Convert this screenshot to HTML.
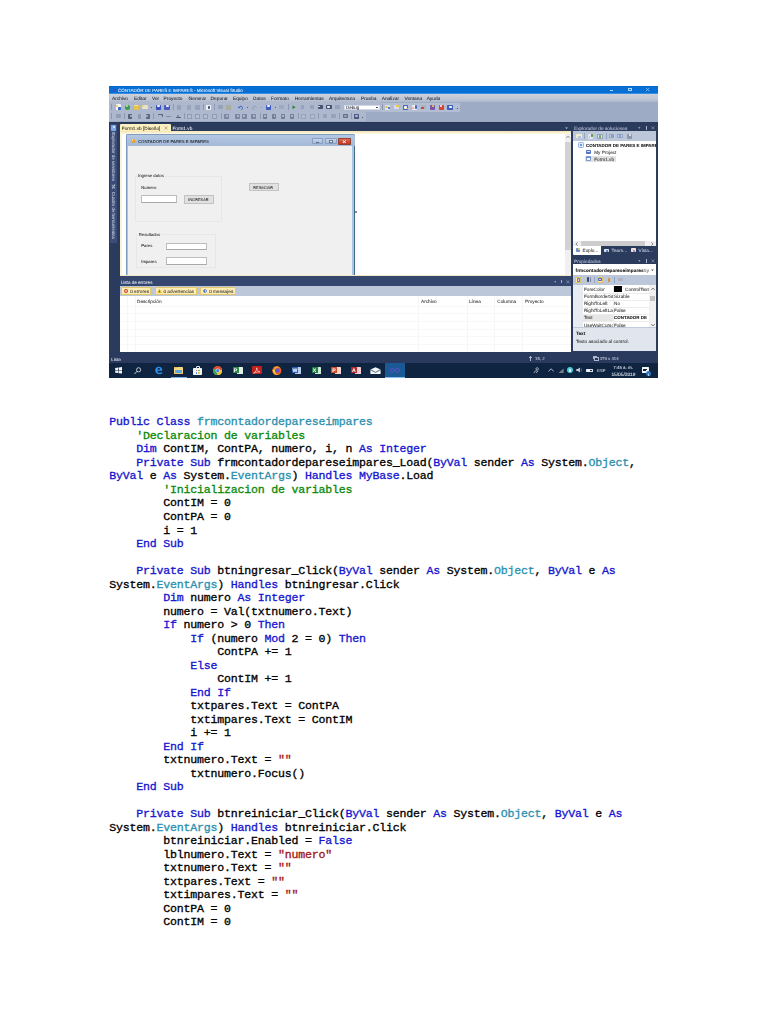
<!DOCTYPE html>
<html lang="es"><head><meta charset="utf-8"><title>Contador de pares e impares</title><style>
html,body{margin:0;padding:0;background:#fff;}
body{width:768px;height:1024px;position:relative;overflow:hidden;font-family:"Liberation Sans",sans-serif;}
.b{position:absolute;box-sizing:border-box;}
.t{position:absolute;left:0;top:0;line-height:0;white-space:nowrap;transform-origin:0 0;font-family:"Liberation Sans",sans-serif;text-rendering:geometricPrecision;-webkit-text-stroke:0.6px;}
.blur{filter:blur(0.6px);}
#shot{position:absolute;left:109px;top:86px;width:549px;height:291.5px;overflow:hidden;}
#shin{position:absolute;left:-109px;top:-86px;width:768px;height:400px;filter:blur(0.3px);}
#code{position:absolute;left:109.3px;top:415.4px;margin:0;font-family:"Liberation Mono",monospace;font-size:11.6px;letter-spacing:-0.21px;-webkit-text-stroke:0.32px;line-height:13.51px;white-space:pre;}
</style></head><body>
<div id="shot"><div id="shin">
<div class="b" style="left:109.00px;top:86.00px;width:549.00px;height:291.50px;background:#2b3b5e;"></div>
<div class="b" style="left:109.00px;top:86.00px;width:549.00px;height:8.40px;background:linear-gradient(#0a5fbd,#066fd6 12%,#066fd6 88%,#6fb0ee);"></div>
<div class="t" style="font-size:45.2px;color:#f2f7fd;transform:translate(118.00px,90.51px) scale(.1);">CONTADOR DE PARES E IMPARES - Microsoft Visual Studio</div>
<div class="b" style="left:112.60px;top:88.80px;width:3.00px;height:2.80px;background:#4a48c0;border-radius:1px;"></div>
<div class="b" style="left:609.60px;top:89.70px;width:3.60px;height:0.60px;background:#b5d3f5;"></div>
<div class="b" style="left:627.90px;top:87.60px;width:3.80px;height:3.40px;border:0.5px solid #b5d3f5;box-sizing:border-box;"></div>
<svg class="b" style="left:645.4px;top:86.8px;width:5.2px;height:5.2px" viewBox="0 0 6 6"><path d="M1 1L5 5M5 1L1 5" stroke="#c3dbf7" stroke-width="0.7" fill="none"/></svg>
<div class="b" style="left:109.00px;top:94.20px;width:549.00px;height:8.00px;background:linear-gradient(#cdd1db,#c0c6d4 60%,#aeb8cd);"></div>
<div class="t" style="font-size:48.0px;color:#1e2230;transform:translate(112.00px,98.48px) scale(.1);">Archivo</div>
<div class="t" style="font-size:48.0px;color:#1e2230;transform:translate(134.00px,98.48px) scale(.1);">Editar</div>
<div class="t" style="font-size:48.0px;color:#1e2230;transform:translate(152.00px,98.48px) scale(.1);">Ver</div>
<div class="t" style="font-size:48.0px;color:#1e2230;transform:translate(163.60px,98.48px) scale(.1);">Proyecto</div>
<div class="t" style="font-size:48.0px;color:#1e2230;transform:translate(188.60px,98.48px) scale(.1);">Generar</div>
<div class="t" style="font-size:48.0px;color:#1e2230;transform:translate(210.60px,98.48px) scale(.1);">Depurar</div>
<div class="t" style="font-size:48.0px;color:#1e2230;transform:translate(233.00px,98.48px) scale(.1);">Equipo</div>
<div class="t" style="font-size:48.0px;color:#1e2230;transform:translate(253.00px,98.48px) scale(.1);">Datos</div>
<div class="t" style="font-size:48.0px;color:#1e2230;transform:translate(271.00px,98.48px) scale(.1);">Formato</div>
<div class="t" style="font-size:48.0px;color:#1e2230;transform:translate(294.75px,98.48px) scale(.1);">Herramientas</div>
<div class="t" style="font-size:48.0px;color:#1e2230;transform:translate(329.00px,98.48px) scale(.1);">Arquitectura</div>
<div class="t" style="font-size:48.0px;color:#1e2230;transform:translate(361.00px,98.48px) scale(.1);">Prueba</div>
<div class="t" style="font-size:48.0px;color:#1e2230;transform:translate(381.75px,98.48px) scale(.1);">Analizar</div>
<div class="t" style="font-size:48.0px;color:#1e2230;transform:translate(404.50px,98.48px) scale(.1);">Ventana</div>
<div class="t" style="font-size:48.0px;color:#1e2230;transform:translate(426.75px,98.48px) scale(.1);">Ayuda</div>
<div class="b" style="left:109.00px;top:102.20px;width:549.00px;height:19.60px;background:#9eabc5;"></div>
<div class="b" style="left:109.00px;top:102.20px;width:272.00px;height:9.80px;background:#adb8ce;"></div>
<div class="b" style="left:381.00px;top:102.60px;width:78.60px;height:9.20px;background:#b4bed3;border-radius:1px;"></div>
<div class="b" style="left:109.00px;top:112.00px;width:257.40px;height:9.40px;background:#adb8ce;border-radius:0 1px 1px 0;"></div>
<div class="blur">
<div class="b" style="left:111.00px;top:104.20px;width:0.60px;height:6.00px;background:#8c98b3;"></div>
<div class="b" style="left:111.00px;top:113.30px;width:0.60px;height:6.00px;background:#8c98b3;"></div>
<div class="b" style="left:381.70px;top:104.20px;width:0.60px;height:6.00px;background:#8c98b3;"></div>
<div class="b" style="left:173.20px;top:104.00px;width:0.60px;height:6.40px;background:#8d99b4;"></div>
<div class="b" style="left:202.70px;top:104.00px;width:0.60px;height:6.40px;background:#8d99b4;"></div>
<div class="b" style="left:214.40px;top:104.00px;width:0.60px;height:6.40px;background:#8d99b4;"></div>
<div class="b" style="left:287.90px;top:104.00px;width:0.60px;height:6.40px;background:#8d99b4;"></div>
<div class="b" style="left:124.40px;top:113.10px;width:0.60px;height:6.40px;background:#8d99b4;"></div>
<div class="b" style="left:153.00px;top:113.10px;width:0.60px;height:6.40px;background:#8d99b4;"></div>
<div class="b" style="left:183.50px;top:113.10px;width:0.60px;height:6.40px;background:#8d99b4;"></div>
<div class="b" style="left:221.00px;top:113.10px;width:0.60px;height:6.40px;background:#8d99b4;"></div>
<div class="b" style="left:259.50px;top:113.10px;width:0.60px;height:6.40px;background:#8d99b4;"></div>
<div class="b" style="left:297.70px;top:113.10px;width:0.60px;height:6.40px;background:#8d99b4;"></div>
<div class="b" style="left:318.20px;top:113.10px;width:0.60px;height:6.40px;background:#8d99b4;"></div>
<div class="b" style="left:339.00px;top:113.10px;width:0.60px;height:6.40px;background:#8d99b4;"></div>
<div class="b" style="left:350.70px;top:113.10px;width:0.60px;height:6.40px;background:#8d99b4;"></div>
<div class="b" style="left:115.55px;top:104.45px;width:5.50px;height:5.50px;background:#f4f6fa;border-radius:0.8px;"></div>
<div class="b" style="left:118.10px;top:106.50px;width:2.60px;height:3.00px;background:#2f62c4;border-radius:0.8px;"></div>
<div class="b" style="left:115.60px;top:104.60px;width:2.00px;height:2.00px;background:#f2cf45;border-radius:0.8px;"></div>
<div class="b" style="left:125.20px;top:104.70px;width:5.00px;height:5.00px;background:#3a9a4a;border-radius:0.8px;border-radius:2.5px;"></div>
<div class="b" style="left:126.00px;top:105.20px;width:2.00px;height:2.00px;background:#bfe6a0;border-radius:0.8px;border-radius:1px;"></div>
<div class="b" style="left:133.50px;top:105.30px;width:5.60px;height:4.40px;background:#e9c24a;border-radius:0.8px;"></div>
<div class="b" style="left:134.30px;top:105.00px;width:4.00px;height:1.20px;background:#f6e29a;border-radius:0.8px;"></div>
<div class="b" style="left:142.20px;top:104.90px;width:5.60px;height:4.60px;background:#e8e2c6;border-radius:0.8px;"></div>
<div class="b" style="left:142.40px;top:105.00px;width:2.00px;height:2.00px;background:#f2d75a;border-radius:0.8px;"></div>
<div class="b" style="left:151.10px;top:106.90px;width:1.20px;height:1.20px;background:#39435c;border-radius:0.8px;"></div>
<div class="b" style="left:155.70px;top:104.60px;width:5.20px;height:5.20px;background:#3b50b8;border-radius:0.8px;"></div>
<div class="b" style="left:156.90px;top:105.00px;width:2.80px;height:2.00px;background:#e9eefb;border-radius:0.8px;"></div>
<div class="b" style="left:164.40px;top:104.60px;width:5.60px;height:5.20px;background:#4a5cc0;border-radius:0.8px;"></div>
<div class="b" style="left:166.30px;top:105.00px;width:2.60px;height:1.80px;background:#e9eefb;border-radius:0.8px;"></div>
<div class="b" style="left:177.10px;top:104.70px;width:4.40px;height:5.00px;background:#96a1b8;border-radius:0.8px;"></div>
<div class="b" style="left:186.50px;top:104.70px;width:4.60px;height:5.00px;background:#9aa5bc;border-radius:0.8px;"></div>
<div class="b" style="left:194.80px;top:104.70px;width:4.80px;height:5.00px;background:#98a2b8;border-radius:0.8px;"></div>
<div class="b" style="left:206.00px;top:104.50px;width:5.00px;height:5.40px;background:#eef1f6;border-radius:0.8px;"></div>
<div class="b" style="left:208.10px;top:106.30px;width:2.40px;height:3.00px;background:#46526f;border-radius:0.8px;"></div>
<div class="b" style="left:218.20px;top:104.90px;width:4.60px;height:4.60px;background:#97a2ba;border-radius:0.8px;"></div>
<div class="b" style="left:226.40px;top:104.80px;width:4.80px;height:4.80px;background:#a8ad9c;border-radius:0.8px;"></div>
<svg class="b" style="left:237.6px;top:104.8px;width:5.4px;height:5px" viewBox="0 0 5.4 5"><path d="M1 2.600C1.800 .8 4 .8 4.600 2.600C5 4 3.800 4.600 3 4.400" stroke="#3a63c8" stroke-width="1" fill="none"/><path d="M.2 1.200L.6 3.600L2.600 2.800Z" fill="#3a63c8"/></svg>
<div class="b" style="left:246.70px;top:107.00px;width:1.20px;height:1.20px;background:#39435c;border-radius:0.8px;"></div>
<svg class="b" style="left:251.6px;top:104.8px;width:5.4px;height:5px" viewBox="0 0 5.4 5"><path d="M4.400 2.600C3.600 .8 1.400 .8 .8 2.600C.4 4 1.600 4.600 2.400 4.400" stroke="#8f9bb6" stroke-width="1" fill="none"/></svg>
<div class="b" style="left:261.25px;top:107.05px;width:1.10px;height:1.10px;background:#7c88a3;border-radius:0.8px;"></div>
<div class="b" style="left:266.10px;top:104.70px;width:5.40px;height:5.00px;background:#3f5cc0;border-radius:0.8px;"></div>
<div class="b" style="left:267.00px;top:105.20px;width:2.60px;height:2.00px;background:#eef2fb;border-radius:0.8px;"></div>
<div class="b" style="left:274.60px;top:107.00px;width:1.20px;height:1.20px;background:#39435c;border-radius:0.8px;"></div>
<div class="b" style="left:279.30px;top:105.00px;width:5.00px;height:4.40px;background:#9ea9bf;border-radius:0.8px;"></div>
<svg class="b" style="left:291.6px;top:105px;width:4px;height:4.4px" viewBox="0 0 5 5.4"><path d="M.6 .3L4.600 2.700L.6 5.100Z" fill="#2f8438"/></svg>
<div class="b" style="left:301.00px;top:105.10px;width:3.40px;height:4.20px;background:#97a2ba;border-radius:0.8px;"></div>
<div class="b" style="left:310.00px;top:105.40px;width:3.60px;height:3.60px;background:#97a2ba;border-radius:0.8px;"></div>
<div class="b" style="left:317.50px;top:104.90px;width:5.40px;height:4.60px;background:#46526f;border-radius:0.8px;"></div>
<div class="b" style="left:318.10px;top:105.60px;width:2.20px;height:1.60px;background:#e6ebf5;border-radius:0.8px;"></div>
<div class="b" style="left:326.30px;top:104.90px;width:5.40px;height:4.60px;background:#46526f;border-radius:0.8px;"></div>
<div class="b" style="left:327.00px;top:105.60px;width:2.80px;height:2.00px;background:#e6ebf5;border-radius:0.8px;"></div>
<div class="b" style="left:335.30px;top:105.10px;width:4.80px;height:4.20px;background:#97a2ba;border-radius:0.8px;"></div>
<div class="b" style="left:343.60px;top:104.60px;width:36.20px;height:5.80px;background:#ffffff;border:0.3px solid #d3d9e6;"></div>
<div class="b" style="left:376.35px;top:106.85px;width:1.30px;height:1.30px;background:#2b3348;border-radius:0.8px;"></div>
<div class="b" style="left:384.50px;top:104.80px;width:5.60px;height:4.80px;background:#dfe4ef;border-radius:0.8px;"></div>
<div class="b" style="left:384.80px;top:105.60px;width:2.80px;height:2.00px;background:#eec84a;border-radius:0.8px;"></div>
<div class="b" style="left:387.70px;top:107.20px;width:2.20px;height:2.00px;background:#3f6ac6;border-radius:0.8px;"></div>
<div class="b" style="left:393.70px;top:104.90px;width:5.60px;height:4.60px;background:#d9dde6;border-radius:0.8px;"></div>
<div class="b" style="left:395.70px;top:105.10px;width:3.00px;height:2.20px;background:#efc640;border-radius:0.8px;"></div>
<div class="b" style="left:402.90px;top:104.70px;width:5.60px;height:5.00px;background:#3f66c4;border-radius:0.8px;"></div>
<div class="b" style="left:403.60px;top:106.10px;width:3.60px;height:2.60px;background:#f3f5fa;border-radius:0.8px;"></div>
<div class="b" style="left:406.40px;top:108.10px;width:2.00px;height:1.40px;background:#ecc54a;border-radius:0.8px;"></div>
<div class="b" style="left:411.80px;top:104.70px;width:5.40px;height:5.00px;background:#f1eef3;border-radius:0.8px;"></div>
<div class="b" style="left:415.00px;top:105.00px;width:1.60px;height:3.60px;background:#4a6ac4;border-radius:0.8px;"></div>
<div class="b" style="left:412.40px;top:106.80px;width:2.00px;height:2.00px;background:#e9a2a8;border-radius:0.8px;"></div>
<div class="b" style="left:420.90px;top:104.90px;width:5.20px;height:4.60px;background:#aab1c4;border-radius:0.8px;"></div>
<div class="b" style="left:421.40px;top:106.60px;width:2.40px;height:2.00px;background:#c4403a;border-radius:0.8px;"></div>
<div class="b" style="left:429.90px;top:104.60px;width:4.80px;height:5.20px;background:#7a58a8;border-radius:0.8px;"></div>
<div class="b" style="left:431.60px;top:105.40px;width:2.40px;height:2.00px;background:#ebca4e;border-radius:0.8px;"></div>
<div class="b" style="left:439.00px;top:104.70px;width:5.00px;height:5.00px;background:#d64536;border-radius:0.8px;"></div>
<div class="b" style="left:439.50px;top:105.20px;width:2.20px;height:2.00px;background:#f0f0f4;border-radius:0.8px;"></div>
<div class="b" style="left:447.40px;top:104.80px;width:5.60px;height:4.80px;background:#3c5fc0;border-radius:0.8px;"></div>
<div class="b" style="left:449.00px;top:106.00px;width:3.20px;height:2.40px;background:#f2f4fa;border-radius:0.8px;"></div>
<div class="b" style="left:456.70px;top:107.80px;width:1.20px;height:1.20px;background:#2e374e;border-radius:0.8px;"></div>
<div class="b" style="left:115.80px;top:114.10px;width:5.00px;height:4.40px;background:#929db5;border-radius:0.8px;"></div>
<div class="b" style="left:128.10px;top:114.00px;width:4.20px;height:4.60px;background:#566079;border-radius:0.8px;"></div>
<div class="b" style="left:129.70px;top:114.70px;width:2.20px;height:2.40px;background:#aeb8ce;border-radius:0.8px;"></div>
<div class="b" style="left:138.00px;top:114.00px;width:2.60px;height:4.60px;background:#8d98b2;border-radius:0.8px;"></div>
<div class="b" style="left:145.90px;top:114.00px;width:4.20px;height:4.60px;background:#5c6780;border-radius:0.8px;"></div>
<div class="b" style="left:146.10px;top:114.70px;width:2.20px;height:2.40px;background:#aeb8ce;border-radius:0.8px;"></div>
<div class="b" style="left:157.50px;top:114.00px;width:5.00px;height:3.40px;background:#59647e;border-radius:0.8px;"></div>
<div class="b" style="left:158.30px;top:115.40px;width:3.40px;height:1.80px;background:#aeb8ce;border-radius:0.8px;"></div>
<div class="b" style="left:166.00px;top:115.60px;width:4.60px;height:1.40px;background:#7f8aa5;border-radius:0.8px;"></div>
<div class="b" style="left:175.50px;top:116.70px;width:5.00px;height:1.60px;background:#566079;border-radius:0.8px;"></div>
<div class="b" style="left:177.40px;top:114.70px;width:2.00px;height:2.00px;background:#7883a0;border-radius:0.8px;"></div>
<div class="b" style="left:186.80px;top:113.90px;width:5.00px;height:4.80px;background:#8f9ab3;border-radius:0.8px;"></div>
<div class="b" style="left:187.80px;top:114.90px;width:3.00px;height:2.80px;background:#b6c0d4;border-radius:0.8px;"></div>
<div class="b" style="left:195.00px;top:113.90px;width:5.00px;height:4.80px;background:#8f9ab3;border-radius:0.8px;"></div>
<div class="b" style="left:196.00px;top:114.90px;width:3.00px;height:2.80px;background:#b6c0d4;border-radius:0.8px;"></div>
<div class="b" style="left:203.30px;top:113.90px;width:5.00px;height:4.80px;background:#8f9ab3;border-radius:0.8px;"></div>
<div class="b" style="left:204.30px;top:114.90px;width:3.00px;height:2.80px;background:#b6c0d4;border-radius:0.8px;"></div>
<div class="b" style="left:212.20px;top:113.90px;width:5.00px;height:4.80px;background:#8f9ab3;border-radius:0.8px;"></div>
<div class="b" style="left:213.20px;top:114.90px;width:3.00px;height:2.80px;background:#b6c0d4;border-radius:0.8px;"></div>
<div class="b" style="left:224.40px;top:114.00px;width:4.60px;height:4.60px;background:#7a859f;border-radius:0.8px;"></div>
<div class="b" style="left:225.70px;top:115.30px;width:2.00px;height:2.00px;background:#b6c0d4;border-radius:0.8px;"></div>
<div class="b" style="left:235.40px;top:114.00px;width:4.60px;height:4.60px;background:#7a859f;border-radius:0.8px;"></div>
<div class="b" style="left:236.70px;top:115.30px;width:2.00px;height:2.00px;background:#b6c0d4;border-radius:0.8px;"></div>
<div class="b" style="left:242.00px;top:114.00px;width:4.60px;height:4.60px;background:#7a859f;border-radius:0.8px;"></div>
<div class="b" style="left:243.30px;top:115.30px;width:2.00px;height:2.00px;background:#b6c0d4;border-radius:0.8px;"></div>
<div class="b" style="left:251.20px;top:114.00px;width:4.60px;height:4.60px;background:#7a859f;border-radius:0.8px;"></div>
<div class="b" style="left:252.50px;top:115.30px;width:2.00px;height:2.00px;background:#b6c0d4;border-radius:0.8px;"></div>
<div class="b" style="left:263.00px;top:113.90px;width:4.40px;height:4.80px;background:#727d98;border-radius:0.8px;"></div>
<div class="b" style="left:264.40px;top:115.20px;width:1.60px;height:2.20px;background:#b6c0d4;border-radius:0.8px;"></div>
<div class="b" style="left:272.10px;top:113.90px;width:4.40px;height:4.80px;background:#727d98;border-radius:0.8px;"></div>
<div class="b" style="left:273.50px;top:115.20px;width:1.60px;height:2.20px;background:#b6c0d4;border-radius:0.8px;"></div>
<div class="b" style="left:281.00px;top:113.90px;width:4.40px;height:4.80px;background:#727d98;border-radius:0.8px;"></div>
<div class="b" style="left:282.40px;top:115.20px;width:1.60px;height:2.20px;background:#b6c0d4;border-radius:0.8px;"></div>
<div class="b" style="left:290.00px;top:113.90px;width:4.40px;height:4.80px;background:#727d98;border-radius:0.8px;"></div>
<div class="b" style="left:291.40px;top:115.20px;width:1.60px;height:2.20px;background:#b6c0d4;border-radius:0.8px;"></div>
<div class="b" style="left:300.60px;top:114.00px;width:5.20px;height:4.60px;background:#97a2ba;border-radius:0.8px;"></div>
<div class="b" style="left:301.60px;top:115.00px;width:3.20px;height:2.60px;background:#b4bed2;border-radius:0.8px;"></div>
<div class="b" style="left:309.60px;top:114.00px;width:5.20px;height:4.60px;background:#97a2ba;border-radius:0.8px;"></div>
<div class="b" style="left:310.60px;top:115.00px;width:3.20px;height:2.60px;background:#b4bed2;border-radius:0.8px;"></div>
<div class="b" style="left:322.90px;top:114.30px;width:4.60px;height:4.00px;background:#97a2ba;border-radius:0.8px;"></div>
<div class="b" style="left:331.20px;top:114.30px;width:4.60px;height:4.00px;background:#97a2ba;border-radius:0.8px;"></div>
<div class="b" style="left:342.60px;top:114.10px;width:5.20px;height:4.40px;background:#606b85;border-radius:0.8px;"></div>
<div class="b" style="left:343.50px;top:114.90px;width:3.40px;height:2.00px;background:#9aa5bd;border-radius:0.8px;"></div>
<div class="b" style="left:353.50px;top:113.90px;width:5.60px;height:4.80px;background:#4a5a80;border-radius:0.8px;"></div>
<div class="b" style="left:354.80px;top:115.10px;width:3.00px;height:2.40px;background:#a8b6d4;border-radius:0.8px;"></div>
<div class="b" style="left:362.10px;top:117.10px;width:1.20px;height:1.20px;background:#2e374e;border-radius:0.8px;"></div>
</div>
<div class="t" style="font-size:45.0px;color:#2b2f3a;transform:translate(346.00px,107.61px) scale(.1);">Debug</div>
<div class="b" style="left:109.00px;top:121.80px;width:549.00px;height:12.20px;background:linear-gradient(#1f2c4a,#2b3b5e 8%,#2b3b5e);"></div>
<div class="b" style="left:109.00px;top:121.80px;width:11.00px;height:241.20px;background:#2b3b5e;"></div>
<div class="b" style="left:110.30px;top:124.00px;width:6.30px;height:119.00px;background:#3a4c77;"></div>
<div class="blur">
<div class="b" style="left:111.30px;top:125.40px;width:4.60px;height:5.20px;background:#7fa8e6;border-radius:0.8px;"></div>
<div class="b" style="left:113.40px;top:125.80px;width:2.00px;height:2.00px;background:#d6e6fb;border-radius:0.8px;"></div>
<div class="b" style="left:112.80px;top:184.10px;width:1.20px;height:5.40px;background:#c3cadb;border-radius:0.8px;transform:rotate(35deg);"></div>
<div class="b" style="left:112.80px;top:184.10px;width:1.20px;height:5.40px;background:#9aa6c2;border-radius:0.8px;transform:rotate(-40deg);"></div>
</div>
<div class="t" style="font-size:43.5px;color:#c9d1e2;transform:translate(113.5px,132.5px) rotate(90deg) scale(.1);">Explorador de servidores</div>
<div class="t" style="font-size:43.5px;color:#c9d1e2;transform:translate(113.5px,192px) rotate(90deg) scale(.1);">Cuadro de herramientas</div>
<div class="b" style="left:120.00px;top:124.20px;width:50.50px;height:7.80px;background:#fdf0c0;border-radius:1px 1px 0 0;"></div>
<div class="t" style="font-size:47.2px;color:#2a271e;transform:translate(121.80px,128.39px) scale(.1);">Form1.vb [Diseño]</div>
<svg class="b" style="left:164.2px;top:126.2px;width:4px;height:4px" viewBox="0 0 4 4"><path d="M.5 .5L3.5 3.5M3.5 .5L.5 3.5" stroke="#8a8570" stroke-width="0.6" fill="none"/></svg>
<div class="t" style="font-size:47.0px;color:#e6eaf2;transform:translate(172.40px,128.39px) scale(.1);">Form1.vb</div>
<div class="b" style="left:120.00px;top:131.40px;width:445.00px;height:144.60px;background:#ffffff;"></div>
<div class="b" style="left:120.00px;top:131.20px;width:451.00px;height:2.80px;background:linear-gradient(#f3e6b2,#f6ecc6 45%,#fdfaee);"></div>
<div class="b" style="left:120.00px;top:134.00px;width:1.60px;height:141.00px;background:#faf3d6;"></div>
<div class="b" style="left:120.00px;top:274.60px;width:451.00px;height:1.60px;background:#f2e8c2;"></div>
<div class="b" style="left:120px;top:133.6px;width:445px;height:141px;overflow:hidden;">
<div class="b" style="left:-120px;top:-133.6px;width:0;height:0;">
<div class="b" style="left:126.00px;top:134.20px;width:229.40px;height:155.80px;background:#a9c3e0;border:0.4px solid #7f9cc0;border-right:0.8px solid #3f6e8c;border-radius:1.5px 1.5px 0 0;"></div>
<div class="b" style="left:126.50px;top:134.70px;width:228.20px;height:10.90px;background:linear-gradient(#b4c8e2,#a2b9d8);border-radius:1.2px 1.2px 0 0;"></div>
<div class="b" style="left:128.40px;top:145.50px;width:223.80px;height:144.50px;background:#f0f0f0;"></div>
<div class="blur">
<div class="b" style="left:131.20px;top:139.00px;width:4.00px;height:3.60px;background:#e9a93a;border-radius:0.8px;"></div>
<div class="b" style="left:131.50px;top:139.40px;width:1.80px;height:1.60px;background:#f7e39a;border-radius:0.8px;"></div>
<div class="b" style="left:133.60px;top:140.90px;width:1.60px;height:1.40px;background:#d0662e;border-radius:0.8px;"></div>
</div>
<div class="t" style="font-size:42.8px;color:#20242c;transform:translate(138.00px,141.13px) scale(.1);">CONTADOR DE PARES E IMPARES</div>
<div class="b" style="left:311.70px;top:138.00px;width:11.60px;height:6.20px;background:linear-gradient(#c6d4e8,#a9bdd9);border:0.4px solid #8aa0c2;border-radius:0.8px;"></div>
<div class="b" style="left:315.80px;top:141.60px;width:3.40px;height:1.20px;background:#5f6f8a;"></div>
<div class="b" style="left:325.00px;top:138.00px;width:11.70px;height:6.20px;background:linear-gradient(#c6d4e8,#a9bdd9);border:0.4px solid #8aa0c2;border-radius:0.8px;"></div>
<div class="b" style="left:329.00px;top:139.60px;width:3.80px;height:3.00px;background:#f2f5fa;border:0.5px solid #6a7890;"></div>
<div class="b" style="left:337.90px;top:138.00px;width:12.90px;height:6.50px;background:linear-gradient(#e0705a,#cf4a34 50%,#c23c28);border:0.4px solid #94402f;border-radius:0.8px;"></div>
<svg class="b" style="left:342.2px;top:139.7px;width:4.6px;height:3.6px" viewBox="0 0 4.6 3.6"><path d="M.6 .4L4 3.2M4 .4L.6 3.2" stroke="#fff" stroke-width="0.9" fill="none"/></svg>
<div class="b" style="left:135.00px;top:175.70px;width:86.70px;height:46.00px;border:0.5px solid #e7e7e7;"></div>
<div class="b" style="left:137.60px;top:173.00px;width:26.60px;height:5.00px;background:#f0f0f0;"></div>
<div class="t" style="font-size:42.5px;color:#2a2a2a;transform:translate(138.00px,175.73px) scale(.1);">Ingrese datos</div>
<div class="t" style="font-size:42.5px;color:#2a2a2a;transform:translate(141.20px,187.53px) scale(.1);">Numero</div>
<div class="b" style="left:141.30px;top:195.30px;width:35.40px;height:8.00px;background:#fff;border:0.5px solid #bdbdbd;border-bottom-color:#a9a9a9;"></div>
<div class="b" style="left:184.00px;top:195.30px;width:30.00px;height:8.40px;background:#e1e1e1;border:0.5px solid #c2c2c2;"></div>
<div class="t" style="font-size:39.0px;color:#2e2e2e;transform:translate(188.20px,199.96px) scale(.1);">INGRESAR</div>
<div class="b" style="left:249.30px;top:182.70px;width:30.00px;height:8.30px;background:#e1e1e1;border:0.5px solid #c2c2c2;"></div>
<div class="t" style="font-size:39.0px;color:#2e2e2e;transform:translate(253.30px,187.36px) scale(.1);">REINICIAR</div>
<div class="b" style="left:136.00px;top:234.00px;width:79.70px;height:34.30px;border:0.5px solid #e7e7e7;"></div>
<div class="b" style="left:138.40px;top:231.50px;width:22.40px;height:5.00px;background:#f0f0f0;"></div>
<div class="t" style="font-size:42.5px;color:#2a2a2a;transform:translate(138.80px,234.73px) scale(.1);">Resultados</div>
<div class="t" style="font-size:42.5px;color:#2a2a2a;transform:translate(141.20px,246.13px) scale(.1);">Pares</div>
<div class="b" style="left:165.70px;top:242.70px;width:41.30px;height:7.30px;background:#fff;border:0.5px solid #bdbdbd;border-bottom-color:#a9a9a9;"></div>
<div class="t" style="font-size:42.5px;color:#2a2a2a;transform:translate(141.20px,261.93px) scale(.1);">Impares</div>
<div class="b" style="left:165.70px;top:257.00px;width:41.30px;height:8.00px;background:#fff;border:0.5px solid #bdbdbd;border-bottom-color:#a9a9a9;"></div>
<div class="b" style="left:355.30px;top:211.30px;width:2.00px;height:2.20px;background:#fff;border:0.4px solid #8a8a8a;"></div>
</div></div>
<div class="b" style="left:565.00px;top:133.60px;width:6.00px;height:141.00px;background:#d2d2d2;"></div>
<div class="b" style="left:565.00px;top:133.60px;width:6.00px;height:8.40px;background:#f0f0f0;"></div>
<svg class="b" style="left:565.6px;top:135px;width:4px;height:4px" viewBox="0 0 4 4"><path d="M.4 2.8L2 1.2L3.6 2.8" stroke="#555" stroke-width="0.7" fill="none"/></svg>
<svg class="b" style="left:565.6px;top:268.6px;width:4px;height:4px" viewBox="0 0 4 4"><path d="M.4 1.2L2 2.8L3.6 1.2" stroke="#555" stroke-width="0.7" fill="none"/></svg>
<svg class="b" style="left:565.3px;top:127.2px;width:3px;height:2.4px" viewBox="0 0 3 2.4"><path d="M.2 .4L1.5 2L2.8 .4Z" fill="#cfd6e4"/></svg>
<div class="b" style="left:565.00px;top:250.00px;width:6.00px;height:24.60px;background:#f0f0f0;"></div>
<div class="b" style="left:571.00px;top:121.80px;width:87.00px;height:230.20px;background:#2b3b5e;"></div>
<div class="t" style="font-size:47.5px;color:#b9c2d6;transform:translate(574.00px,128.19px) scale(.1);">Explorador de soluciones</div>
<svg class="b" style="left:638.4000000000001px;top:126.89999999999999px;width:2.6px;height:2.1px" viewBox="0 0 3 2.4"><path d="M.2 .4L1.500 2L2.800 .4Z" fill="#b4bdd0"/></svg>
<div class="b" style="left:645.50px;top:125.60px;width:1.10px;height:2.60px;background:#a9b3c8;"></div>
<div class="b" style="left:645.80px;top:128.20px;width:0.50px;height:1.40px;background:#a9b3c8;"></div>
<svg class="b" style="left:650.9000000000001px;top:125.89999999999999px;width:3.8px;height:3.8px" viewBox="0 0 4.4 4.4"><path d="M.5 .5L3.900 3.900M3.900 .5L.5 3.900" stroke="#b4bdd0" stroke-width="0.6" fill="none"/></svg>
<div class="b" style="left:573.00px;top:131.40px;width:83.20px;height:9.40px;background:#bcc7d9;"></div>
<div class="blur">
<div class="b" style="left:576.30px;top:133.90px;width:5.40px;height:4.60px;background:#f0ecd2;border-radius:0.8px;"></div>
<div class="b" style="left:578.30px;top:135.70px;width:3.00px;height:2.20px;background:#b4bfd4;border-radius:0.8px;"></div>
<div class="b" style="left:584.40px;top:133.40px;width:0.50px;height:5.60px;background:#96a3bd;"></div>
<div class="b" style="left:588.30px;top:133.70px;width:5.00px;height:5.00px;background:#dfe5f0;border-radius:0.8px;"></div>
<div class="b" style="left:590.50px;top:134.30px;width:2.20px;height:2.60px;background:#5e9a46;border-radius:0.8px;"></div>
<div class="b" style="left:588.80px;top:136.20px;width:1.60px;height:1.60px;background:#e8c54a;border-radius:0.8px;"></div>
<div class="b" style="left:597.40px;top:133.70px;width:5.20px;height:5.00px;background:#dde6f2;border-radius:0.8px;border:0.4px solid #8fa0c0;"></div>
<div class="b" style="left:598.90px;top:135.40px;width:2.60px;height:2.40px;background:#67a844;border-radius:0.8px;"></div>
<div class="b" style="left:605.60px;top:133.40px;width:0.50px;height:5.60px;background:#96a3bd;"></div>
<div class="b" style="left:609.10px;top:133.90px;width:5.00px;height:4.60px;background:#d4dbea;border-radius:0.8px;border:0.4px solid #8fa0c0;"></div>
<div class="b" style="left:610.50px;top:135.20px;width:2.20px;height:2.00px;background:#7e86c8;border-radius:0.8px;"></div>
<div class="b" style="left:617.40px;top:133.90px;width:5.20px;height:4.60px;background:#cfd8ea;border-radius:0.8px;border:0.4px solid #8fa0c0;"></div>
<div class="b" style="left:618.70px;top:135.20px;width:2.60px;height:2.00px;background:#6f8fd2;border-radius:0.8px;"></div>
<div class="b" style="left:627.20px;top:134.00px;width:4.40px;height:4.80px;background:#8c96ad;border-radius:0.8px;"></div>
<div class="b" style="left:628.80px;top:134.20px;width:2.00px;height:2.00px;background:#e8ecf4;border-radius:0.8px;"></div>
</div>
<div class="b" style="left:573.00px;top:140.80px;width:83.20px;height:105.40px;background:#fff;"></div>
<div class="b" style="left:573px;top:140.8px;width:83.2px;height:100px;overflow:hidden;"><div class="b" style="left:-573px;top:-140.8px;">
<div class="blur">
<div class="b" style="left:578.00px;top:142.20px;width:5.60px;height:5.60px;background:#e4eefb;border-radius:0.8px;border:0.4px solid #8fb0e4;border-radius:1.4px;"></div>
<div class="b" style="left:579.80px;top:143.90px;width:2.20px;height:2.60px;background:#5a86d6;border-radius:0.8px;"></div>
<div class="b" style="left:585.50px;top:149.90px;width:5.60px;height:3.80px;background:#5575c4;border-radius:0.8px;"></div>
<div class="b" style="left:586.50px;top:150.50px;width:3.60px;height:1.80px;background:#e6ecf8;border-radius:0.8px;"></div>
</div>
<div class="t" style="font-size:44.7px;color:#111;transform:translate(586.00px,145.41px) scale(.1);font-weight:bold;">CONTADOR DE PARES E IMPARES</div>
<div class="t" style="font-size:47.0px;color:#2e2e2e;transform:translate(594.20px,152.19px) scale(.1);">My Project</div>
<div class="b" style="left:584.60px;top:155.60px;width:31.20px;height:6.40px;background:#e2e2e2;"></div>
<div class="blur">
<div class="b" style="left:585.80px;top:156.40px;width:5.60px;height:4.80px;background:#f4f7fc;border-radius:0.8px;border:0.4px solid #7f98cc;"></div>
<div class="b" style="left:586.10px;top:156.70px;width:5.00px;height:1.20px;background:#6a90dc;border-radius:0.8px;"></div>
</div>
<div class="t" style="font-size:47.0px;color:#333;transform:translate(594.20px,159.19px) scale(.1);">Form1.vb</div>
</div></div>
<div class="b" style="left:573.00px;top:241.00px;width:83.20px;height:5.40px;background:#f0f0f0;"></div>
<div class="b" style="left:580.50px;top:241.40px;width:64.30px;height:4.60px;background:#cdcdcd;"></div>
<svg class="b" style="left:575px;top:241.7px;width:4px;height:4px" viewBox="0 0 4 4"><path d="M2.6 .4L.9 2L2.6 3.6" stroke="#555" stroke-width="0.7" fill="none"/></svg>
<svg class="b" style="left:650px;top:241.7px;width:4px;height:4px" viewBox="0 0 4 4"><path d="M1.4 .4L3.1 2L1.4 3.6" stroke="#555" stroke-width="0.7" fill="none"/></svg>
<div class="b" style="left:573.00px;top:246.40px;width:27.80px;height:8.20px;background:#fff;border-radius:0 0 1px 1px;"></div>
<div class="blur">
<div class="b" style="left:575.60px;top:248.20px;width:4.00px;height:4.00px;background:#6f8fd0;border-radius:0.8px;"></div>
<div class="b" style="left:577.50px;top:248.30px;width:2.20px;height:2.20px;background:#f2d66a;border-radius:0.8px;"></div>
<div class="b" style="left:604.40px;top:248.70px;width:4.40px;height:3.80px;background:#dfe7f5;border-radius:0.8px;"></div>
<div class="b" style="left:606.30px;top:249.90px;width:2.20px;height:2.20px;background:#4a6fc0;border-radius:0.8px;"></div>
<div class="b" style="left:631.10px;top:248.30px;width:4.60px;height:3.80px;background:#e9e4f0;border-radius:0.8px;"></div>
<div class="b" style="left:633.40px;top:249.80px;width:2.00px;height:2.00px;background:#a86cc0;border-radius:0.8px;"></div>
<div class="b" style="left:631.50px;top:248.80px;width:1.80px;height:1.60px;background:#e8c24a;border-radius:0.8px;"></div>
</div>
<div class="t" style="font-size:47.0px;color:#2e2e2e;transform:translate(582.60px,250.89px) scale(.1);">Explo...</div>
<div class="t" style="font-size:47.0px;color:#c3ccdd;transform:translate(611.60px,250.89px) scale(.1);">Team...</div>
<div class="t" style="font-size:47.0px;color:#c3ccdd;transform:translate(638.60px,250.89px) scale(.1);">Vista...</div>
<div class="t" style="font-size:47.2px;color:#b9c2d6;transform:translate(574.00px,261.39px) scale(.1);">Propiedades</div>
<svg class="b" style="left:638.4000000000001px;top:260.1px;width:2.6px;height:2.1px" viewBox="0 0 3 2.4"><path d="M.2 .4L1.500 2L2.800 .4Z" fill="#b4bdd0"/></svg>
<div class="b" style="left:645.50px;top:258.80px;width:1.10px;height:2.60px;background:#a9b3c8;"></div>
<div class="b" style="left:645.80px;top:261.40px;width:0.50px;height:1.40px;background:#a9b3c8;"></div>
<svg class="b" style="left:650.9000000000001px;top:259.1px;width:3.8px;height:3.8px" viewBox="0 0 4.4 4.4"><path d="M.5 .5L3.900 3.900M3.900 .5L.5 3.900" stroke="#b4bdd0" stroke-width="0.6" fill="none"/></svg>
<div class="b" style="left:573.00px;top:264.20px;width:83.20px;height:11.00px;background:#fff;"></div>
<div class="t" style="font-size:47.0px;color:#111;transform:translate(575.50px,270.29px) scale(.1);font-weight:bold;letter-spacing:0.7px;">frmcontadordepareseimpares</div>
<div class="t" style="font-size:47.0px;color:#666;transform:translate(643.60px,270.29px) scale(.1);">Sy</div>
<svg class="b" style="left:650.6px;top:269px;width:3px;height:2.4px" viewBox="0 0 3 2.4"><path d="M.2 .4L1.5 2L2.8 .4Z" fill="#444"/></svg>
<div class="b" style="left:573.00px;top:275.20px;width:83.20px;height:9.40px;background:#bcc7d9;"></div>
<div class="blur">
<div class="b" style="left:575.10px;top:276.60px;width:6.40px;height:6.40px;background:#fbeab0;border-radius:0.8px;border:0.4px solid #e0c060;"></div>
<div class="b" style="left:576.50px;top:278.00px;width:3.60px;height:3.60px;background:#6c7aa0;border-radius:0.8px;"></div>
<div class="b" style="left:577.50px;top:279.00px;width:1.60px;height:1.60px;background:#f4f4f4;border-radius:0.8px;"></div>
<div class="b" style="left:587.20px;top:277.30px;width:1.60px;height:5.00px;background:#3b4866;border-radius:0.8px;"></div>
<div class="b" style="left:589.60px;top:277.30px;width:1.60px;height:5.00px;background:#7a86a6;border-radius:0.8px;"></div>
<div class="b" style="left:594.40px;top:276.60px;width:0.50px;height:6.60px;background:#96a3bd;"></div>
<div class="b" style="left:596.70px;top:276.50px;width:6.60px;height:6.60px;background:#fbeab0;border-radius:0.8px;border:0.4px solid #e0c060;"></div>
<div class="b" style="left:598.20px;top:278.30px;width:3.60px;height:3.00px;background:#4a66c0;border-radius:0.8px;"></div>
<div class="b" style="left:599.00px;top:278.60px;width:2.00px;height:1.20px;background:#e8eef8;border-radius:0.8px;"></div>
<div class="b" style="left:608.00px;top:277.60px;width:2.40px;height:4.40px;background:#e0902e;border-radius:0.8px;"></div>
<div class="b" style="left:614.40px;top:276.60px;width:0.50px;height:6.60px;background:#96a3bd;"></div>
<div class="b" style="left:618.10px;top:278.10px;width:4.60px;height:3.40px;background:#aab2c4;border-radius:0.8px;"></div>
</div>
<div class="b" style="left:573.00px;top:284.60px;width:83.20px;height:42.80px;background:#fff;"></div>
<div class="b" style="left:573.00px;top:284.60px;width:9.50px;height:42.80px;background:#e9ebf2;"></div>
<div class="b" style="left:582.50px;top:313.90px;width:30.90px;height:7.20px;background:#e6e6e6;"></div>
<div class="b" style="left:573px;top:284.6px;width:83.2px;height:42.8px;overflow:hidden;"><div class="b" style="left:-573px;top:-284.6px;">
<div class="b" style="left:582.5px;top:284.6px;width:30.4px;height:42.8px;overflow:hidden;"><div class="b" style="left:-582.5px;top:-284.6px;">
<div class="t" style="font-size:47.0px;color:#2e2e2e;transform:translate(583.90px,289.39px) scale(.1);">ForeColor</div>
<div class="t" style="font-size:47.0px;color:#2e2e2e;transform:translate(583.90px,296.59px) scale(.1);">FormBorderSt</div>
<div class="t" style="font-size:47.0px;color:#2e2e2e;transform:translate(583.90px,303.89px) scale(.1);">RightToLeft</div>
<div class="t" style="font-size:47.0px;color:#2e2e2e;transform:translate(583.90px,310.59px) scale(.1);">RightToLeftLa</div>
<div class="t" style="font-size:47.0px;color:#2e2e2e;transform:translate(583.90px,317.89px) scale(.1);">Text</div>
<div class="t" style="font-size:47.0px;color:#2e2e2e;transform:translate(583.90px,325.19px) scale(.1);">UseWaitCurso</div>
</div></div>
<div class="t" style="font-size:47.0px;color:#2e2e2e;transform:translate(614.10px,296.59px) scale(.1);">Sizable</div>
<div class="t" style="font-size:47.0px;color:#2e2e2e;transform:translate(614.10px,303.89px) scale(.1);">No</div>
<div class="t" style="font-size:47.0px;color:#2e2e2e;transform:translate(614.10px,310.59px) scale(.1);">False</div>
<div class="t" style="font-size:47.0px;color:#2e2e2e;transform:translate(614.10px,325.19px) scale(.1);">False</div>
<div class="b" style="left:614.00px;top:286.30px;width:7.80px;height:5.70px;background:#000;"></div>
<div class="t" style="font-size:47.0px;color:#2e2e2e;transform:translate(625.00px,289.39px) scale(.1);">ControlText</div>
<div class="t" style="font-size:44.5px;color:#111;transform:translate(614.10px,317.92px) scale(.1);font-weight:bold;">CONTADOR DE</div>
<div class="b" style="left:582.50px;top:292.70px;width:66.70px;height:0.30px;background:#ececec;"></div>
<div class="b" style="left:582.50px;top:299.90px;width:66.70px;height:0.30px;background:#ececec;"></div>
<div class="b" style="left:582.50px;top:307.00px;width:66.70px;height:0.30px;background:#ececec;"></div>
<div class="b" style="left:582.50px;top:314.00px;width:66.70px;height:0.30px;background:#ececec;"></div>
<div class="b" style="left:582.50px;top:321.10px;width:66.70px;height:0.30px;background:#ececec;"></div>
<div class="b" style="left:613.20px;top:284.60px;width:0.30px;height:42.80px;background:#ececec;"></div>
</div></div>
<div class="b" style="left:649.20px;top:284.60px;width:6.60px;height:42.80px;background:#f1f1f1;"></div>
<div class="b" style="left:649.60px;top:295.70px;width:5.80px;height:5.70px;background:#c4c4c4;"></div>
<svg class="b" style="left:650.5px;top:287px;width:4px;height:4px" viewBox="0 0 4 4"><path d="M.4 2.8L2 1.2L3.6 2.8" stroke="#2e2e2e" stroke-width="0.7" fill="none"/></svg>
<svg class="b" style="left:650.5px;top:322.6px;width:4px;height:4px" viewBox="0 0 4 4"><path d="M.4 1.2L2 2.8L3.6 1.2" stroke="#2e2e2e" stroke-width="0.7" fill="none"/></svg>
<div class="b" style="left:573.00px;top:327.60px;width:83.20px;height:23.60px;background:#e1e5ee;"></div>
<div class="b" style="left:573.00px;top:327.40px;width:83.20px;height:0.80px;background:#c3cbdb;"></div>
<div class="t" style="font-size:47.0px;color:#222;transform:translate(575.90px,333.69px) scale(.1);font-weight:bold;">Text</div>
<div class="t" style="font-size:47.0px;color:#2e2e2e;transform:translate(575.90px,341.09px) scale(.1);">Texto asociado al control.</div>
<div class="b" style="left:120.00px;top:276.20px;width:451.00px;height:9.60px;background:#35476f;"></div>
<div class="t" style="font-size:45.5px;color:#dfe5f0;transform:translate(120.80px,282.71px) scale(.1);">Lista de errores</div>
<svg class="b" style="left:553.7px;top:280.8px;width:2.6px;height:2.1px" viewBox="0 0 3 2.4"><path d="M.2 .4L1.500 2L2.800 .4Z" fill="#b4bdd0"/></svg>
<div class="b" style="left:560.80px;top:279.50px;width:1.10px;height:2.60px;background:#a9b3c8;"></div>
<div class="b" style="left:561.10px;top:282.10px;width:0.50px;height:1.40px;background:#a9b3c8;"></div>
<svg class="b" style="left:566.2px;top:279.8px;width:3.8px;height:3.8px" viewBox="0 0 4.4 4.4"><path d="M.5 .5L3.900 3.900M3.900 .5L.5 3.900" stroke="#b4bdd0" stroke-width="0.6" fill="none"/></svg>
<div class="b" style="left:120.00px;top:285.80px;width:451.00px;height:10.00px;background:#bcc7d9;"></div>
<div class="b" style="left:121.30px;top:287.20px;width:30.00px;height:7.80px;background:#fdedb5;border:0.4px solid #e5c866;border-radius:0.6px;"></div>
<div class="b" style="left:154.70px;top:287.20px;width:42.60px;height:7.80px;background:#fdedb5;border:0.4px solid #e5c866;border-radius:0.6px;"></div>
<div class="b" style="left:200.30px;top:287.20px;width:35.40px;height:7.80px;background:#fdedb5;border:0.4px solid #e5c866;border-radius:0.6px;"></div>
<div class="blur">
<div class="b" style="left:123.90px;top:289.00px;width:4.20px;height:4.20px;background:#d2452c;border-radius:0.8px;border-radius:2.1px;"></div>
<div class="b" style="left:125.00px;top:290.10px;width:2.00px;height:2.00px;background:#f3c0b0;border-radius:0.8px;border-radius:1px;"></div>
<svg class="b" style="left:156.6px;top:288.6px;width:5px;height:4.8px" viewBox="0 0 5 4.8"><path d="M2.5 .3L4.8 4.5H.2Z" fill="#f2c628" stroke="#8a6a10" stroke-width=".3"/><path d="M2.5 1.8V3.3" stroke="#222" stroke-width=".6"/></svg>
<div class="b" style="left:202.70px;top:289.00px;width:4.20px;height:4.20px;background:#e8f0fb;border-radius:0.8px;border-radius:2.1px;border:0.4px solid #6c8cc8;"></div>
<div class="b" style="left:204.35px;top:290.00px;width:0.90px;height:2.20px;background:#3a62b8;border-radius:0.8px;"></div>
</div>
<div class="t" style="font-size:47.0px;color:#333;transform:translate(130.20px,291.49px) scale(.1);">0 errores</div>
<div class="t" style="font-size:47.0px;color:#333;transform:translate(163.40px,291.49px) scale(.1);">0 advertencias</div>
<div class="t" style="font-size:47.0px;color:#333;transform:translate(209.20px,291.49px) scale(.1);">0 mensajes</div>
<div class="b" style="left:120.00px;top:295.80px;width:451.00px;height:55.80px;background:#fff;"></div>
<div class="t" style="font-size:47.0px;color:#2e2e2e;transform:translate(137.00px,301.19px) scale(.1);">Descripción</div>
<div class="t" style="font-size:47.0px;color:#2e2e2e;transform:translate(421.00px,301.19px) scale(.1);">Archivo</div>
<div class="t" style="font-size:47.0px;color:#2e2e2e;transform:translate(469.00px,301.19px) scale(.1);">Línea</div>
<div class="t" style="font-size:47.0px;color:#2e2e2e;transform:translate(497.30px,301.19px) scale(.1);">Columna</div>
<div class="t" style="font-size:47.0px;color:#2e2e2e;transform:translate(525.00px,301.19px) scale(.1);">Proyecto</div>
<div class="b" style="left:120.00px;top:305.70px;width:451.00px;height:0.35px;background:#f8f8f8;"></div>
<div class="b" style="left:120.00px;top:313.30px;width:451.00px;height:0.35px;background:#f8f8f8;"></div>
<div class="b" style="left:120.00px;top:321.00px;width:451.00px;height:0.35px;background:#f8f8f8;"></div>
<div class="b" style="left:120.00px;top:328.60px;width:451.00px;height:0.35px;background:#f8f8f8;"></div>
<div class="b" style="left:120.00px;top:336.20px;width:451.00px;height:0.35px;background:#f8f8f8;"></div>
<div class="b" style="left:120.00px;top:343.80px;width:451.00px;height:0.35px;background:#f8f8f8;"></div>
<div class="b" style="left:127.30px;top:295.80px;width:0.35px;height:55.80px;background:#f6f6f6;"></div>
<div class="b" style="left:134.70px;top:295.80px;width:0.35px;height:55.80px;background:#f6f6f6;"></div>
<div class="b" style="left:418.30px;top:295.80px;width:0.35px;height:55.80px;background:#f6f6f6;"></div>
<div class="b" style="left:466.70px;top:295.80px;width:0.35px;height:55.80px;background:#f6f6f6;"></div>
<div class="b" style="left:494.00px;top:295.80px;width:0.35px;height:55.80px;background:#f6f6f6;"></div>
<div class="b" style="left:522.30px;top:295.80px;width:0.35px;height:55.80px;background:#f6f6f6;"></div>
<div class="b" style="left:109.00px;top:351.60px;width:549.00px;height:11.40px;background:#2a3a5e;"></div>
<div class="t" style="font-size:44.5px;color:#e4e9f2;transform:translate(111.30px,359.22px) scale(.1);">Listo</div>
<div class="t" style="font-size:43.0px;color:#c5cddc;transform:translate(535.00px,359.03px) scale(.1);">15, 2</div>
<div class="t" style="font-size:43.0px;color:#c5cddc;transform:translate(599.70px,359.03px) scale(.1);">379 x 414</div>
<div class="b" style="left:109.00px;top:363.00px;width:549.00px;height:14.50px;background:#0f2440;"></div>
<div class="b" style="left:385.00px;top:363.00px;width:19.80px;height:14.50px;background:#1b5896;"></div>
<div class="b" style="left:385.00px;top:376.60px;width:19.80px;height:0.90px;background:#86bdf0;"></div>
<div class="b" style="left:170.50px;top:376.70px;width:16.30px;height:0.80px;background:#78b0e6;"></div>
<div class="blur">
<svg class="b" style="left:114.8px;top:367.2px;width:7.6px;height:6.6px" viewBox="0 0 7.6 6.6"><path d="M.2 1L3.300 .55V3.100H.2ZM3.800 .5L7.400 0V3.100H3.800ZM.2 3.600H3.300V6.100L.2 5.700ZM3.800 3.600H7.400V6.600L3.800 6.150Z" fill="#f4f6f9"/></svg>
<svg class="b" style="left:134.4px;top:366.79999999999995px;width:7.4px;height:7.4px" viewBox="0 0 7.4 7.4"><circle cx="4.600" cy="2.800" r="2.100" fill="none" stroke="#e6eaf0" stroke-width=".8"/><path d="M3.100 4.300L.5 7" stroke="#e6eaf0" stroke-width=".9"/></svg>
<svg class="b" style="left:153.6px;top:366.09999999999997px;width:9.2px;height:8.8px" viewBox="0 0 7.4 7.4"><path d="M.8 3.4C1 1.6 2.3.6 3.9.6c1.900 0 2.900 1.300 2.900 3.300H2.700c0 1.100.8 1.800 2 1.800.8 0 1.400-.2 2-.6v1.300c-.6.300-1.400.5-2.300.5C2.300 6.900 .8 5.700 .8 3.400Zm1.900-.5h2.400c0-.8-.5-1.300-1.200-1.300-.7 0-1.100.5-1.200 1.300Z" fill="#2c8ee8"/></svg>
<div class="b" style="left:173.80px;top:367.40px;width:9.40px;height:6.60px;background:#f4d982;border-radius:0.8px;"></div>
<div class="b" style="left:175.00px;top:370.30px;width:7.00px;height:3.00px;background:#5aa8e4;border-radius:0.8px;"></div>
<div class="b" style="left:173.80px;top:372.50px;width:9.40px;height:1.40px;background:#e9c860;border-radius:0.8px;"></div>
<div class="b" style="left:173.80px;top:366.50px;width:4.40px;height:1.20px;background:#e8bd4a;border-radius:0.8px;"></div>
<div class="b" style="left:193.40px;top:368.00px;width:9.00px;height:6.60px;background:#f2f4f7;border-radius:0.8px;"></div>
<div class="b" style="left:195.90px;top:366.00px;width:4.00px;height:2.40px;border:.7px solid #f2f4f7;border-bottom:0;border-radius:1.5px 1.5px 0 0;"></div>
<div class="b" style="left:195.75px;top:369.55px;width:1.70px;height:1.70px;background:#e8452c;border-radius:0.8px;"></div>
<div class="b" style="left:198.35px;top:369.55px;width:1.70px;height:1.70px;background:#6fb83a;border-radius:0.8px;"></div>
<div class="b" style="left:195.75px;top:371.85px;width:1.70px;height:1.70px;background:#2c8ee8;border-radius:0.8px;"></div>
<div class="b" style="left:198.35px;top:371.85px;width:1.70px;height:1.70px;background:#f2c02a;border-radius:0.8px;"></div>
<svg class="b" style="left:213px;top:365.79999999999995px;width:9.4px;height:9.4px" viewBox="0 0 7 7"><circle cx="3.5" cy="3.5" r="3.4" fill="#f0c030"/><path d="M3.5 3.500L.35 2.100A3.400 3.400 0 0 1 6.800 2.500Z" fill="#dc4a32"/><path d="M3.5 3.500L.35 2.100A3.400 3.400 0 0 0 3 6.850Z" fill="#3fa04e"/><circle cx="3.5" cy="3.5" r="1.600" fill="#f4f6fa"/><circle cx="3.5" cy="3.5" r="1.200" fill="#4285e4"/></svg>
<div class="b" style="left:252.40px;top:365.90px;width:9.60px;height:8.60px;background:#c4201c;border-radius:0.8px;border-radius:1px;"></div>
<svg class="b" style="left:253.4px;top:366.79999999999995px;width:7.6px;height:7px" viewBox="0 0 7.6 7"><path d="M.6 6.200C2.600 5 3.800 3 3.800 .8C3.800 3 5 4.600 7 5C5 4.800 2.600 5.200 .6 6.200Z" stroke="#f8e4e2" stroke-width=".7" fill="none"/></svg>
<svg class="b" style="left:272.2px;top:365.79999999999995px;width:9.6px;height:9.6px" viewBox="0 0 7 7"><circle cx="3.5" cy="3.5" r="3.3" fill="#f2641e"/><circle cx="3.9" cy="3.300" r="1.700" fill="#6a4fd0"/><path d="M.3 3C.9 5.600 2.500 6.800 4.700 6.700 2.700 6 1.900 4.500 2.300 2.400 1.500 2.400 .8 2.500 .3 3Z" fill="#fbc42a"/><path d="M1.200 1.500C2.500 .3 4.500 0 6 1.300 4.800 1 3.600 1.200 2.900 2.200Z" fill="#f8a82a"/></svg>
<svg class="b" style="left:369.8px;top:366.79999999999995px;width:11px;height:7.6px" viewBox="0 0 11 7.600"><path d="M.4 2.500L5.500 .2L10.600 2.500V7.300H.4Z" fill="#f4f6f9"/><path d="M.4 2.600L5.500 5.400L10.600 2.600" stroke="#0f2440" stroke-width=".7" fill="none"/></svg>
<svg class="b" style="left:390px;top:368.2px;width:9.6px;height:4.6px" viewBox="0 0 9.600 4.600"><path d="M4.800 2.300C3.800 .8 3 .4 2.200 .4 1.200 .4 .4 1.200 .4 2.300S1.200 4.200 2.200 4.200C3 4.200 3.800 3.800 4.800 2.300S6.600 .4 7.400 .4C8.400 .4 9.200 1.200 9.200 2.300S8.400 4.200 7.400 4.200C6.600 4.200 5.800 3.800 4.800 2.300Z" stroke="#6a52c8" stroke-width="1" fill="none"/></svg>
<svg class="b" style="left:533px;top:367.2px;width:7px;height:6.6px" viewBox="0 0 6 6"><circle cx="3.600" cy="1.700" r="1.100" fill="none" stroke="#dfe4ec" stroke-width=".6"/><path d="M.8 5.500C1 3.800 2.200 3.300 3.400 3.500" stroke="#dfe4ec" stroke-width=".6" fill="none"/><path d="M4.600 3.400L2.600 5.600" stroke="#dfe4ec" stroke-width=".6"/></svg>
<svg class="b" style="left:547.8px;top:368.4px;width:6.2px;height:4px" viewBox="0 0 6.200 4"><path d="M.5 3.300L3.100 .8L5.700 3.300" stroke="#dfe4ec" stroke-width=".8" fill="none"/></svg>
<svg class="b" style="left:558.4px;top:368.0px;width:6px;height:5.4px" viewBox="0 0 6 5.400"><path d="M.4 5L5.600 .4V5Z" fill="#76818f"/></svg>
<div class="b" style="left:567.00px;top:367.40px;width:6.00px;height:6.00px;background:#49c9da;border-radius:0.8px;border-radius:3px;"></div>
<div class="b" style="left:568.90px;top:368.90px;width:2.20px;height:3.00px;background:#eafcff;border-radius:0.8px;border-radius:1px;"></div>
<svg class="b" style="left:575.8px;top:367.4px;width:7.4px;height:6px" viewBox="0 0 7.400 6"><path d="M.3 2.100H1.900L4 .4V5.600L1.900 3.900H.3Z" fill="#c4cbd6"/><path d="M5.100 1.400C6 2.300 6 3.700 5.100 4.600" stroke="#97a1b0" stroke-width=".6" fill="none"/></svg>
<div class="b" style="left:586.00px;top:368.60px;width:6.60px;height:3.80px;border:0.6px solid #dfe4ec;border-radius:.6px;"></div>
<div class="b" style="left:587.00px;top:369.40px;width:3.00px;height:2.20px;background:#eef1f6;"></div>
<div class="b" style="left:642.00px;top:367.40px;width:7.40px;height:5.20px;background:#f4f6f9;border-radius:.6px;"></div>
<div class="b" style="left:643.20px;top:368.60px;width:3.80px;height:0.70px;background:#0f2440;"></div>
<div class="b" style="left:643.20px;top:370.00px;width:2.80px;height:0.60px;background:#0f2440;"></div>
<div class="b" style="left:645.90px;top:371.20px;width:5.20px;height:5.20px;background:#2c78c8;border-radius:0.8px;border-radius:2.6px;"></div>
<div class="b" style="left:530.00px;top:355.60px;width:0.50px;height:5.40px;background:#aeb8ca;"></div>
<div class="b" style="left:528.60px;top:357.00px;width:3.40px;height:0.50px;background:#aeb8ca;"></div>
<div class="b" style="left:594.00px;top:357.00px;width:4.60px;height:3.60px;border:.5px solid #aeb8ca;"></div>
<div class="b" style="left:592.80px;top:355.80px;width:3.80px;height:3.20px;border:.5px solid #aeb8ca;border-right:0;border-bottom:0;"></div>
</div>
<div class="b" style="left:236.50px;top:366.80px;width:6.00px;height:7.20px;background:#dff0e4;border-radius:.6px;"></div>
<div class="b" style="left:232.90px;top:367.30px;width:6.20px;height:6.20px;background:#2f8a4a;border-radius:.5px;"></div>
<div class="t" style="font-size:52.0px;color:#fff;transform:translate(233.80px,370.50px) scale(.1);font-weight:bold;">P</div>
<div class="b" style="left:295.30px;top:366.80px;width:6.00px;height:7.20px;background:#b9cdee;border-radius:.6px;"></div>
<div class="b" style="left:291.70px;top:367.30px;width:6.20px;height:6.20px;background:#2b5fb4;border-radius:.5px;"></div>
<div class="t" style="font-size:52.0px;color:#fff;transform:translate(292.60px,370.50px) scale(.1);font-weight:bold;">W</div>
<div class="b" style="left:315.40px;top:366.80px;width:6.00px;height:7.20px;background:#d0ead8;border-radius:.6px;"></div>
<div class="b" style="left:311.80px;top:367.30px;width:6.20px;height:6.20px;background:#217a46;border-radius:.5px;"></div>
<div class="t" style="font-size:52.0px;color:#fff;transform:translate(312.70px,370.50px) scale(.1);font-weight:bold;">X</div>
<div class="b" style="left:334.90px;top:366.80px;width:6.00px;height:7.20px;background:#f6d6cc;border-radius:.6px;"></div>
<div class="b" style="left:331.30px;top:367.30px;width:6.20px;height:6.20px;background:#d04a2a;border-radius:.5px;"></div>
<div class="t" style="font-size:52.0px;color:#fff;transform:translate(332.20px,370.50px) scale(.1);font-weight:bold;">P</div>
<div class="b" style="left:354.60px;top:366.80px;width:6.00px;height:7.20px;background:#f0d0d2;border-radius:.6px;"></div>
<div class="b" style="left:351.00px;top:367.30px;width:6.20px;height:6.20px;background:#b02a30;border-radius:.5px;"></div>
<div class="t" style="font-size:52.0px;color:#fff;transform:translate(351.90px,370.50px) scale(.1);font-weight:bold;">A</div>
<div class="t" style="font-size:40.5px;color:#dfe4ec;transform:translate(597.30px,370.95px) scale(.1);">ESP</div>
<div class="t" style="font-size:44.5px;color:#e3e8ef;transform:translate(613.20px,367.72px) scale(.1);">7:45 a. m.</div>
<div class="t" style="font-size:48.0px;color:#e3e8ef;transform:translate(611.40px,374.38px) scale(.1);">15/05/2019</div>
<div class="t" style="font-size:34.0px;color:#fff;transform:translate(647.70px,374.41px) scale(.1);">1</div>
</div></div>
<pre id="code"><span style="color:#1515d0">Public Class </span><span style="color:#2b91af">frmcontadordepareseimpares</span>
<span style="color:#0a8a0a">    &#x27;Declaracion de variables</span>
<span style="color:#1515d0">    Dim </span><span style="color:#000">ContIM, ContPA, numero, i, n </span><span style="color:#1515d0">As Integer</span>
<span style="color:#1515d0">    Private Sub </span><span style="color:#000">frmcontadordepareseimpares_Load(</span><span style="color:#1515d0">ByVal </span><span style="color:#000">sender </span><span style="color:#1515d0">As </span><span style="color:#000">System.</span><span style="color:#2b91af">Object</span><span style="color:#000">, </span>
<span style="color:#1515d0">ByVal </span><span style="color:#000">e </span><span style="color:#1515d0">As </span><span style="color:#000">System.</span><span style="color:#2b91af">EventArgs</span><span style="color:#000">) </span><span style="color:#1515d0">Handles MyBase</span><span style="color:#000">.Load</span>
<span style="color:#0a8a0a">        &#x27;Inicializacion de variables</span>
<span style="color:#000">        ContIM = 0</span>
<span style="color:#000">        ContPA = 0</span>
<span style="color:#000">        i = 1</span>
<span style="color:#1515d0">    End Sub</span>

<span style="color:#1515d0">    Private Sub </span><span style="color:#000">btningresar_Click(</span><span style="color:#1515d0">ByVal </span><span style="color:#000">sender </span><span style="color:#1515d0">As </span><span style="color:#000">System.</span><span style="color:#2b91af">Object</span><span style="color:#000">, </span><span style="color:#1515d0">ByVal </span><span style="color:#000">e </span><span style="color:#1515d0">As </span>
<span style="color:#000">System.</span><span style="color:#2b91af">EventArgs</span><span style="color:#000">) </span><span style="color:#1515d0">Handles </span><span style="color:#000">btningresar.Click</span>
<span style="color:#1515d0">        Dim </span><span style="color:#000">numero </span><span style="color:#1515d0">As Integer</span>
<span style="color:#000">        numero = Val(txtnumero.Text)</span>
<span style="color:#1515d0">        If </span><span style="color:#000">numero &gt; 0 </span><span style="color:#1515d0">Then</span>
<span style="color:#1515d0">            If </span><span style="color:#000">(numero </span><span style="color:#1515d0">Mod </span><span style="color:#000">2 = 0) </span><span style="color:#1515d0">Then</span>
<span style="color:#000">                ContPA += 1</span>
<span style="color:#1515d0">            Else</span>
<span style="color:#000">                ContIM += 1</span>
<span style="color:#1515d0">            End If</span>
<span style="color:#000">            txtpares.Text = ContPA</span>
<span style="color:#000">            txtimpares.Text = ContIM</span>
<span style="color:#000">            i += 1</span>
<span style="color:#1515d0">        End If</span>
<span style="color:#000">        txtnumero.Text = </span><span style="color:#a31515">&quot;&quot;</span>
<span style="color:#000">            txtnumero.Focus()</span>
<span style="color:#1515d0">    End Sub</span>

<span style="color:#1515d0">    Private Sub </span><span style="color:#000">btnreiniciar_Click(</span><span style="color:#1515d0">ByVal </span><span style="color:#000">sender </span><span style="color:#1515d0">As </span><span style="color:#000">System.</span><span style="color:#2b91af">Object</span><span style="color:#000">, </span><span style="color:#1515d0">ByVal </span><span style="color:#000">e </span><span style="color:#1515d0">As </span>
<span style="color:#000">System.</span><span style="color:#2b91af">EventArgs</span><span style="color:#000">) </span><span style="color:#1515d0">Handles </span><span style="color:#000">btnreiniciar.Click</span>
<span style="color:#000">        btnreiniciar.Enabled = </span><span style="color:#1515d0">False</span>
<span style="color:#000">        lblnumero.Text = </span><span style="color:#a31515">&quot;numero&quot;</span>
<span style="color:#000">        txtnumero.Text = </span><span style="color:#a31515">&quot;&quot;</span>
<span style="color:#000">        txtpares.Text = </span><span style="color:#a31515">&quot;&quot;</span>
<span style="color:#000">        txtimpares.Text = </span><span style="color:#a31515">&quot;&quot;</span>
<span style="color:#000">        ContPA = 0</span>
<span style="color:#000">        ContIM = 0</span></pre>
</body></html>
